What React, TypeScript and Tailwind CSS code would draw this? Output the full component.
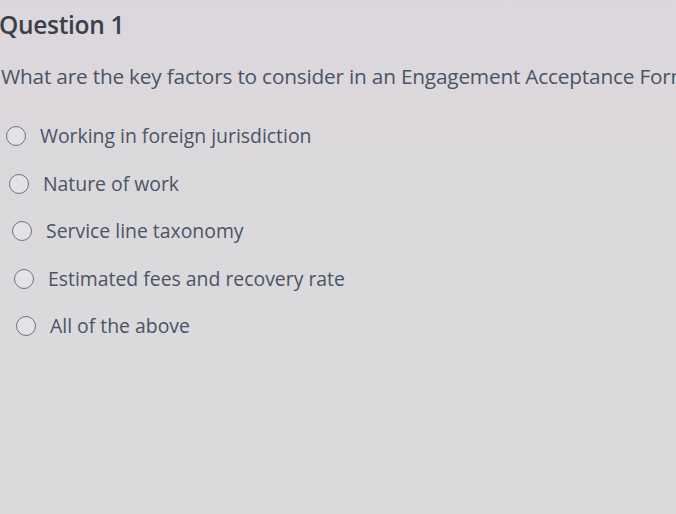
import React from "react";

type Option = {
  label: string;
  indent: string;
};

// the photo is slightly skewed, so each row sits a little further right
const options: Option[] = [
  { label: "Working in foreign jurisdiction", indent: "pl-[6px]" },
  { label: "Nature of work", indent: "pl-[9px]" },
  { label: "Service line taxonomy", indent: "pl-[12px]" },
  { label: "Estimated fees and recovery rate", indent: "pl-[14px]" },
  { label: "All of the above", indent: "pl-[16px]" },
];

const Radio = () => (
  <span className="w-[20px] h-[20px] rounded-full border-[1.5px] border-[#6b7380] bg-[#e3e3e5] shrink-0" />
);

const App = () => {
  return (
    <div
      className="w-[676px] h-[514px] overflow-hidden bg-gradient-to-b from-[#dcd7dc] via-[#dbd9dc] to-[#d8dbd9] text-[#4a5466]"
      style={{ fontFamily: '"Open Sans", "Noto Sans", sans-serif' }}
    >
      {/* Heading */}
      <h1 className="pt-[8px] -ml-[1px] text-[24.5px] leading-[34px] font-semibold text-[#3a404b] tracking-[-0.3px]">
        Question 1
      </h1>

      {/* Question */}
      <p className="mt-[20px] pl-[1px] text-[20.8px] leading-[28px] whitespace-nowrap tracking-[-0.2px]">
        What are the key factors to consider in an Engagement Acceptance Form
      </p>

      {/* Options */}
      <div className="mt-[32px] flex flex-col gap-[19.5px]">
        {options.map((option) => (
          <label key={option.label} className={`flex items-center gap-[14px] ${option.indent}`}>
            <Radio />
            <span className="text-[19.4px] leading-[28px] whitespace-nowrap">
              {option.label}
            </span>
          </label>
        ))}
      </div>
    </div>
  );
};

export default App;
